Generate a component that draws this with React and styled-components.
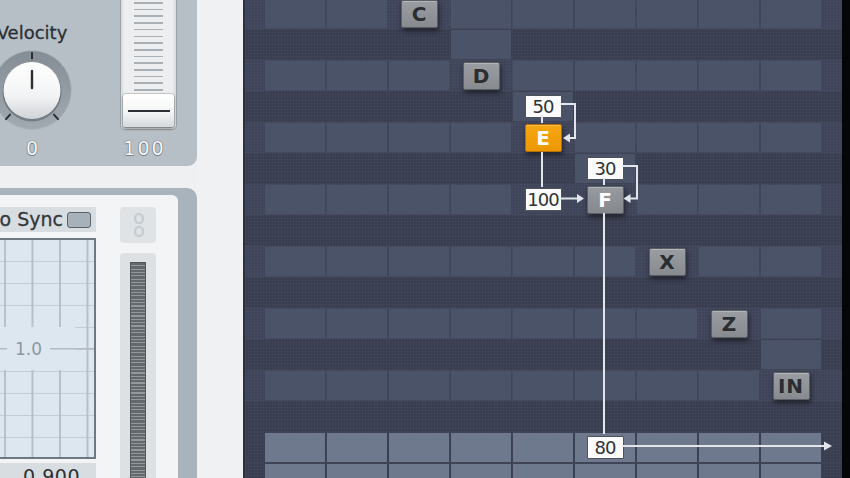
import React from "react";
import styled, { createGlobalStyle } from "styled-components";

const Global = createGlobalStyle`
  html, body { margin: 0; padding: 0; overflow: hidden; background: #eef0f2; }
  #root { width: 850px; height: 478px; overflow: hidden; }
`;

const Page = styled.div`
  display: flex;
  width: 850px;
  height: 478px;
  overflow: hidden;
  background: #eef0f2;
  font-family: "DejaVu Sans", "Liberation Sans", sans-serif;
`;

/* ---------- left sidebar ---------- */
const Sidebar = styled.aside`
  flex: 0 0 237px;
  margin-left: -40px;
  display: flex;
  flex-direction: column;
  gap: 22px;
`;

const VelocityPanel = styled.section`
  margin-top: -20px;
  height: 186px;
  box-sizing: border-box;
  display: flex;
  align-items: flex-end;
  gap: 48px;
  padding: 0 0 9px 32px;
  background: #b7bfc6;
  border-radius: 0 0 9px 0;
`;

const ControlGroup = styled.div`
  display: flex;
  flex-direction: column;
  align-items: center;
  width: ${(p) => p.$width}px;
`;

const ControlLabel = styled.div`
  font-size: 18px;
  line-height: 20px;
  color: #2a2f35;
  white-space: nowrap;
  margin-bottom: 7px;
  -webkit-text-stroke: 0.3px #2a2f35;
`;

const ControlValue = styled.div`
  margin-top: 9px;
  padding-right: ${(p) => p.$shift || 0}px;
  font-size: 19px;
  line-height: 18px;
  letter-spacing: ${(p) => p.$spacing || 0}px;
  color: #f7f8f9;
  text-shadow: 0 0 1px #56606a, 0 0 1px #56606a, 0 1px 0 #7f8891;
`;

const Track = styled.div`
  height: 150px;
  width: 57px;
  box-sizing: border-box;
  display: flex;
  flex-direction: column;
  background: #eceef0;
  border: 1.5px solid #9aa2a9;
  border-top: none;
  border-radius: 0 0 5px 5px;
  box-shadow: inset 2px 0 2px rgba(0, 0, 0, 0.08), inset -2px 0 2px rgba(0, 0, 0, 0.08);
`;

const TrackLines = styled.div`
  flex: 1;
  margin: 0 13px;
  background: repeating-linear-gradient(
    to bottom,
    #a9b0b6 0 1.6px,
    transparent 1.6px 6.7px
  );
  background-position: 0 2px;
`;

const SliderCap = styled.div`
  height: 33px;
  margin: 0 2px 2px;
  display: flex;
  align-items: center;
  justify-content: center;
  border-radius: 3px;
  background: linear-gradient(to bottom, #ffffff 0%, #f4f5f6 55%, #d5d9dc 100%);
  box-shadow: 0 2px 3px rgba(0, 0, 0, 0.35), 0 0 0 1px rgba(120, 128, 136, 0.35);
  &::after {
    content: "";
    width: 42px;
    height: 2px;
    background: #2c3035;
  }
`;

const MixPanel = styled.section`
  flex: 1;
  display: flex;
  padding: 7px 19px 0 0;
  background: #a9b3bc;
  border-radius: 0 10px 0 0;
`;

const MixInner = styled.div`
  flex: 1;
  display: flex;
  gap: 24px;
  padding-top: 12px;
  background: #f2f4f5;
  border-radius: 0 6px 0 0;
`;

const LeftCol = styled.div`
  width: 136px;
  display: flex;
  flex-direction: column;
`;

const SyncStrip = styled.div`
  height: 25px;
  display: flex;
  align-items: center;
  justify-content: flex-end;
  gap: 4px;
  padding-right: 5px;
  overflow: hidden;
  background: #d8dde1;
`;

const SyncText = styled.span`
  flex-shrink: 0;
  font-size: 19px;
  line-height: 1;
  color: #33383d;
  white-space: nowrap;
  -webkit-text-stroke: 0.3px #33383d;
`;

const Toggle = styled.span`
  flex-shrink: 0;
  width: 24px;
  height: 16px;
  box-sizing: border-box;
  background: #a7b1b9;
  border: 1.5px solid #5b646c;
  border-radius: 3px;
`;

const Graph = styled.div`
  margin-top: 6px;
  height: 221px;
  box-sizing: border-box;
  display: flex;
  align-items: center;
  border: 2px solid #6e7880;
  background-color: #dce7f0;
  background-image: linear-gradient(to right, #b8bfc6 0 2px, transparent 2px),
    linear-gradient(to bottom, #c5ccd2 0 1.5px, transparent 1.5px);
  background-size: 27.5px 100%, 100% 22px;
  background-position: 14.5px 0, 0 21px;
`;

const MidBand = styled.div`
  width: 100%;
  height: 43px;
  display: flex;
  align-items: center;
  background: linear-gradient(#b4bcc3, #b4bcc3) 0 50% / 100% 1.5px no-repeat,
    linear-gradient(to right, #dce7f0 0 113px, transparent 113px);
`;

const MidLabel = styled.span`
  margin-left: 45px;
  width: 43px;
  text-align: center;
  font-size: 17px;
  line-height: 20px;
  color: #8e979f;
  background: #dce7f0;
`;

const ValueStrip = styled.div`
  margin-top: 4px;
  flex: 1;
  display: flex;
  justify-content: flex-end;
  padding: 3px 16px 0 0;
  background: #d8dde1;
  font-size: 19px;
  line-height: 20px;
  letter-spacing: 0.5px;
  color: #2b2f33;
`;

const RightCol = styled.div`
  width: 36px;
  display: flex;
  flex-direction: column;
`;

const LinkButton = styled.div`
  height: 36px;
  display: flex;
  align-items: center;
  justify-content: center;
  background: #dfe3e6;
  border-radius: 4px;
`;

const Meter = styled.div`
  margin-top: 10px;
  flex: 1;
  display: flex;
  padding: 9px 10px 0;
  background: #dde1e4;
  border-radius: 4px 4px 0 0;
`;

const MeterBar = styled.div`
  flex: 1;
  box-sizing: border-box;
  border: 1px solid #53575c;
  border-bottom: none;
  background: repeating-linear-gradient(
    to bottom,
    #63686d 0 2.2px,
    #93989d 2.2px 3.35px
  );
`;

const Gutter = styled.div`
  flex: 0 0 46px;
  background: #eff1f3;
`;

/* ---------- sequencer ---------- */
const Sequencer = styled.main`
  flex: 0 0 599px;
  box-sizing: border-box;
  position: relative;
  overflow: hidden;
  border-left: 2px solid #2b3043;
  background: #383d50;
`;

const Lanes = styled.div`
  margin-top: -2px;
  display: flex;
  flex-direction: column;
`;

const BAND = { lane: "#3e4459", gap: "#383d50" };

const Lane = styled.div`
  height: 31px;
  box-sizing: border-box;
  padding: 1px 0 1px 20px;
  display: grid;
  grid-template-columns: repeat(9, 60px);
  column-gap: 2px;
  background-color: ${(p) => BAND[p.$band]};
  background-image: linear-gradient(rgba(255, 255, 255, 0.025) 1px, transparent 1px),
    linear-gradient(90deg, rgba(255, 255, 255, 0.025) 1px, transparent 1px);
  background-size: 3px 3px;
`;

const TONE = { none: "transparent", cell: "#4b5368", light: "#6f798d" };

const Slot = styled.div`
  height: 29px;
  display: flex;
  align-items: center;
  justify-content: center;
  background: ${(p) => TONE[p.$tone]};
`;

const BLOCK = {
  plain: { bg: "linear-gradient(#9a9ea2, #878b8f)", border: "#5c6065", color: "#2a2d31" },
  accent: { bg: "linear-gradient(#f6a612, #ec9800)", border: "#b57200", color: "#ffffff" },
  active: { bg: "linear-gradient(#979b9f, #85898d)", border: "#5c6065", color: "#ffffff" },
};

const Block = styled.div`
  position: relative;
  z-index: 1;
  width: 37px;
  height: 28px;
  box-sizing: border-box;
  display: flex;
  align-items: center;
  justify-content: center;
  font-family: "DejaVu Sans", sans-serif;
  font-weight: bold;
  font-size: 20px;
  line-height: 1;
  letter-spacing: ${(p) => (p.children === "IN" ? 1 : 0)}px;
  color: ${(p) => BLOCK[p.$variant].color};
  background: ${(p) => BLOCK[p.$variant].bg};
  border: 1px solid ${(p) => BLOCK[p.$variant].border};
  border-radius: 2px;
  box-shadow: 1px 3px 5px rgba(0, 0, 0, 0.5), inset 0 1px 0 rgba(255, 255, 255, 0.25);
`;

const Tag = styled.div`
  position: relative;
  z-index: 1;
  width: 37px;
  height: 23px;
  box-sizing: border-box;
  display: flex;
  align-items: center;
  justify-content: center;
  background: #fbfbfb;
  border: 1px solid #4c5258;
  border-radius: 1px;
  font-size: 18px;
  line-height: 1;
  letter-spacing: -1px;
  color: #2e3236;
`;

const Wires = styled.svg`
  position: absolute;
  left: 0;
  top: 0;
  z-index: 2;
  pointer-events: none;
`;

const Edge = styled.div`
  flex: 0 0 8px;
  background: #050608;
`;

/* ---------- data ---------- */
const lane = (band, base, extra = {}) => ({
  band,
  slots: Array.from({ length: 9 }, (_, i) => ({ tone: base, ...(extra[i] || {}) })),
});

const LANES = [
  lane("lane", "cell", { 2: { tone: "none", block: "C" } }),
  lane("gap", "none", { 3: { tone: "cell" } }),
  lane("lane", "cell", { 3: { tone: "none", block: "D" } }),
  lane("gap", "none", { 4: { tone: "cell", tag: "50" } }),
  lane("lane", "cell", { 4: { tone: "none", block: "E", variant: "accent" } }),
  lane("gap", "none", { 5: { tone: "cell", tag: "30" } }),
  lane("lane", "cell", {
    4: { tone: "none", tag: "100" },
    5: { tone: "none", block: "F", variant: "active" },
  }),
  lane("gap", "none"),
  lane("lane", "cell", { 6: { tone: "none", block: "X" } }),
  lane("gap", "none"),
  lane("lane", "cell", { 7: { tone: "none", block: "Z" } }),
  lane("gap", "none", { 8: { tone: "cell" } }),
  lane("lane", "cell", { 8: { tone: "none", block: "IN" } }),
  lane("gap", "none"),
  lane("gap", "light", { 5: { tone: "light", tag: "80" } }),
  lane("gap", "light"),
];

/* ---------- drawings ---------- */
function Knob() {
  return (
    <svg width="80" height="80" viewBox="0 0 80 80">
      <defs>
        <linearGradient id="knobRing" x1="0" y1="0" x2="0" y2="1">
          <stop offset="0" stopColor="#848d95" />
          <stop offset="1" stopColor="#a2aab1" />
        </linearGradient>
        <linearGradient id="knobCap" x1="0" y1="0" x2="0" y2="1">
          <stop offset="0" stopColor="#ffffff" />
          <stop offset="0.6" stopColor="#f2f3f4" />
          <stop offset="1" stopColor="#cfd3d7" />
        </linearGradient>
      </defs>
      <circle cx="40" cy="40" r="39.5" fill="url(#knobRing)" />
      <circle cx="40" cy="40" r="39.5" fill="none" stroke="#aeb6bd" strokeWidth="1" />
      <circle cx="40" cy="42" r="29.5" fill="rgba(40,46,52,0.35)" />
      <circle cx="40" cy="40.5" r="28.5" fill="url(#knobCap)" />
      <line x1="40" y1="21" x2="40" y2="38" stroke="#2b2f34" strokeWidth="2.4" strokeLinecap="round" />
      <line x1="40" y1="3" x2="40" y2="8.5" stroke="#2b2f34" strokeWidth="2" strokeLinecap="round" />
      <line x1="18" y1="64.6" x2="14" y2="69.1" stroke="#2b2f34" strokeWidth="2" strokeLinecap="round" />
      <line x1="62" y1="64.6" x2="66" y2="69.1" stroke="#2b2f34" strokeWidth="2" strokeLinecap="round" />
    </svg>
  );
}

function ChainIcon() {
  return (
    <svg width="36" height="36" viewBox="0 0 36 36">
      <ellipse cx="19" cy="11.5" rx="4" ry="4.6" fill="none" stroke="#c5ccd2" strokeWidth="2.4" />
      <ellipse cx="19" cy="24.5" rx="4" ry="4.6" fill="none" stroke="#c5ccd2" strokeWidth="2.4" />
    </svg>
  );
}

function ConnectionWires() {
  const s = { stroke: "#e2e6ec", strokeWidth: 2, fill: "none" };
  const head = "#e2e6ec";
  return (
    <Wires width="597" height="478" viewBox="0 0 597 478">
      <g transform="translate(-245 0)">
        <path d="M561 104 H575 V138 H567" {...s} />
        <path d="M563 138 L570 133.5 L570 142.5 Z" fill={head} />
        <path d="M542 115 V123" {...s} />
        <path d="M542 152 V187" {...s} />
        <path d="M561 198.5 H579" {...s} />
        <path d="M584 198.5 L577 194 L577 203 Z" fill={head} />
        <path d="M622 166 H637 V198.5 H628" {...s} />
        <path d="M623.5 198.5 L630.5 194 L630.5 203 Z" fill={head} />
        <path d="M604 178 V185" {...s} />
        <path d="M604 213 V434" {...s} />
        <path d="M622 446 H826" {...s} />
        <path d="M832 446 L824 441.5 L824 450.5 Z" fill={head} />
      </g>
    </Wires>
  );
}

export default function App() {
  return (
    <>
      <Global />
      <Page>
        <Sidebar>
          <VelocityPanel>
            <ControlGroup $width={80}>
              <ControlLabel>Velocity</ControlLabel>
              <Knob />
              <ControlValue>0</ControlValue>
            </ControlGroup>
            <ControlGroup $width={57}>
              <Track>
                <TrackLines />
                <SliderCap />
              </Track>
              <ControlValue $spacing={2} $shift={8}>100</ControlValue>
            </ControlGroup>
          </VelocityPanel>
          <MixPanel>
            <MixInner>
              <LeftCol>
                <SyncStrip>
                  <SyncText>Tempo Sync</SyncText>
                  <Toggle />
                </SyncStrip>
                <Graph>
                  <MidBand>
                    <MidLabel>1.0</MidLabel>
                  </MidBand>
                </Graph>
                <ValueStrip>0.900</ValueStrip>
              </LeftCol>
              <RightCol>
                <LinkButton>
                  <ChainIcon />
                </LinkButton>
                <Meter>
                  <MeterBar />
                </Meter>
              </RightCol>
            </MixInner>
          </MixPanel>
        </Sidebar>
        <Gutter />
        <Sequencer>
          <Lanes>
            {LANES.map((l, li) => (
              <Lane key={li} $band={l.band}>
                {l.slots.map((sl, si) => (
                  <Slot key={si} $tone={sl.tone}>
                    {sl.block && <Block $variant={sl.variant || "plain"}>{sl.block}</Block>}
                    {sl.tag && <Tag>{sl.tag}</Tag>}
                  </Slot>
                ))}
              </Lane>
            ))}
          </Lanes>
          <ConnectionWires />
        </Sequencer>
        <Edge />
      </Page>
    </>
  );
}
